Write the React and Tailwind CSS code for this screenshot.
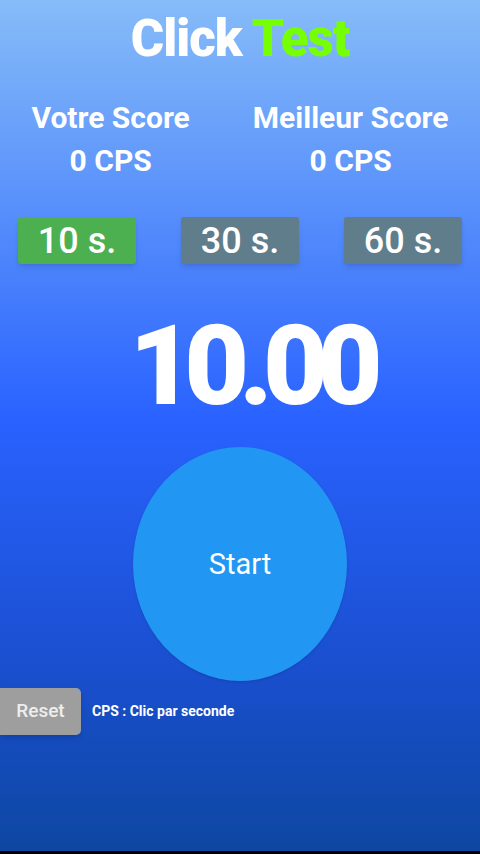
export default function App() {
  return (
    <div
      className="relative h-[854px] w-[480px] overflow-hidden bg-[linear-gradient(180deg,#86bcf8_0%,#2962ff_49%,#1a4fcf_78%,#0d47a1_100%)] text-white"
      style={{ fontFamily: "Roboto, 'Noto Sans', sans-serif" }}
    >
      <div className="flex h-[851px] flex-col">
        <h1 className="mt-[13px] text-center text-[51px] font-black leading-none tracking-[-1px]">
          Click <span className="text-[#76ff03]">Test</span>
        </h1>

        <div className="mt-[32px] flex justify-around">
          <div className="flex flex-col items-center text-[30px] font-bold leading-[43px]">
            <span>Votre Score</span>
            <span>0 CPS</span>
          </div>
          <div className="flex flex-col items-center text-[30px] font-bold leading-[43px]">
            <span>Meilleur Score</span>
            <span>0 CPS</span>
          </div>
        </div>

        <div className="mt-[35px] flex justify-between px-[18px]">
          <button className="h-[47px] w-[118px] rounded-[3px] bg-[#4caf50] text-[36px] font-medium leading-none shadow-md">
            10 s.
          </button>
          <button className="h-[47px] w-[118px] rounded-[3px] bg-[#607d8b] text-[36px] font-medium leading-none shadow-md">
            30 s.
          </button>
          <button className="h-[47px] w-[118px] rounded-[3px] bg-[#607d8b] text-[36px] font-medium leading-none shadow-md">
            60 s.
          </button>
        </div>

        <div className="mt-[46px] pl-[22px] text-center text-[112px] font-black leading-none tracking-[-10px]">
          10.00
        </div>

        <div className="mt-[25px] flex justify-center">
          <button className="h-[234px] w-[214px] rounded-[50%] bg-[#2196f3] text-[29px] leading-none shadow-sm">
            Start
          </button>
        </div>

        <div className="mt-[7px] flex items-center gap-[11px]">
          <button className="h-[47px] w-[81px] rounded-r-[5px] bg-[#9e9e9e] text-[19px] font-medium text-[#eeeeee] shadow-md">
            Reset
          </button>
          <span className="text-[14px] font-bold">CPS : Clic par seconde</span>
        </div>
      </div>
      <div className="h-[3px] bg-black" />
    </div>
  )
}
